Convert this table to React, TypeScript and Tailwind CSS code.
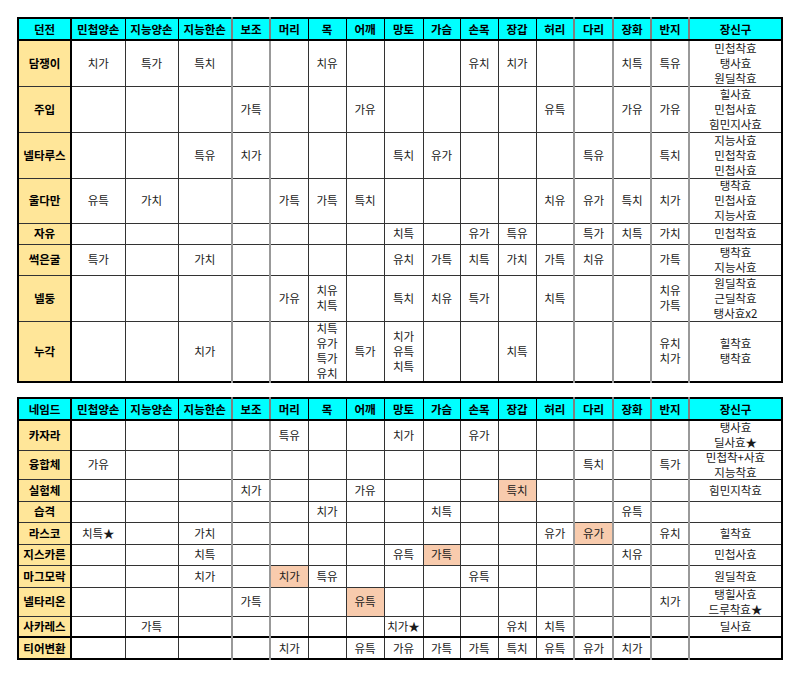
type Cell = string | string[]

const COLS = ['민첩양손', '지능양손', '지능한손', '보조', '머리', '목', '어깨', '망토', '가슴', '손목', '장갑', '허리', '다리', '장화', '반지', '장신구']
const WIDTHS = [53, 54, 53, 54, 38, 38, 38, 38, 39, 37, 38, 38, 38, 39, 38, 38, 93]
// columns whose left edge is drawn as a thick grey line
const GREY_LEFT = [4, 5, 13, 14, 15, 16]

type Row = { name: string; h: number; cells: Cell[]; hl?: number[]; thickTop?: boolean }

const DUNGEONS: Row[] = [
  { name: '담쟁이', h: 46, cells: ['치가', '특가', '특치', '', '', '치유', '', '', '', '유치', '치가', '', '', '치특', '특유', ['민첩착효', '탱사효', '원딜착효']] },
  { name: '주입', h: 46, cells: ['', '', '', '가특', '', '', '가유', '', '', '', '', '유특', '', '가유', '가유', ['힐사효', '민첩사효', '힘민지사효']] },
  { name: '넬타루스', h: 46, cells: ['', '', '특유', '치가', '', '', '', '특치', '유가', '', '', '', '특유', '', '특치', ['지능사효', '민첩착효', '민첩사효']] },
  { name: '울다만', h: 45, cells: ['유특', '가치', '', '', '가특', '가특', '특치', '', '', '', '', '치유', '유가', '특치', '치가', ['탱착효', '민첩사효', '지능사효']] },
  { name: '자유', h: 21, cells: ['', '', '', '', '', '', '', '치특', '', '유가', '특유', '', '특가', '치특', '가치', '민첩착효'] },
  { name: '썩은굴', h: 31, cells: ['특가', '', '가치', '', '', '', '', '유치', '가특', '치특', '가치', '가특', '치유', '', '가특', ['탱착효', '지능사효']] },
  { name: '넬둥', h: 46, cells: ['', '', '', '', '가유', ['치유', '치특'], '', '특치', '치유', '특가', '', '치특', '', '', ['치유', '가특'], ['원딜착효', '근딜착효', '탱사효x2']] },
  { name: '누각', h: 61, cells: ['', '', '치가', '', '', ['치특', '유가', '특가', '유치'], '특가', ['치가', '유특', '치특'], '', '', '치특', '', '', '', ['유치', '치가'], ['힐착효', '탱착효']] },
]

const RAIDS: Row[] = [
  { name: '카자라', h: 30, cells: ['', '', '', '', '특유', '', '', '치가', '', '유가', '', '', '', '', '', ['탱사효', '딜사효★']] },
  { name: '융합체', h: 29, cells: ['가유', '', '', '', '', '', '', '', '', '', '', '', '특치', '', '특가', ['민첩착+사효', '지능착효']] },
  { name: '실험체', h: 22, cells: ['', '', '', '치가', '', '', '가유', '', '', '', '특치', '', '', '', '', '힘민지착효'], hl: [10] },
  { name: '습격', h: 21, cells: ['', '', '', '', '', '치가', '', '', '치특', '', '', '', '', '유특', '', ''] },
  { name: '라스코', h: 22, cells: ['치특★', '', '가치', '', '', '', '', '', '', '', '', '유가', '유가', '', '유치', '힐착효'], hl: [12] },
  { name: '지스카른', h: 21, cells: ['', '', '치특', '', '', '', '', '유특', '가특', '', '', '', '', '치유', '', '민첩사효'], hl: [8] },
  { name: '마그모락', h: 22, cells: ['', '', '치가', '', '치가', '특유', '', '', '', '유특', '', '', '', '', '', '원딜착효'], hl: [4] },
  { name: '넬타리온', h: 29, cells: ['', '', '', '가특', '', '', '유특', '', '', '', '', '', '', '', '치가', ['탱힐사효', '드루착효★']], hl: [6] },
  { name: '사카레스', h: 21, cells: ['', '가특', '', '', '', '', '', '치가★', '', '', '유치', '치특', '', '', '', '딜사효'] },
  { name: '티어변환', h: 22, thickTop: true, cells: ['', '', '', '', '치가', '', '유특', '가유', '가특', '가특', '특치', '유특', '유가', '치가', '', ''] },
]

function Lines({ v }: { v: Cell }) {
  const list = Array.isArray(v) ? v : [v]
  // negative margin keeps multi-line cells from pushing the row taller than set
  return (
    <div className="-my-[3px]">
      {list.map((t, i) => (
        <div key={i}>{t}</div>
      ))}
    </div>
  )
}

function GearTable({ title, rows }: { title: string; rows: Row[] }) {
  return (
    <table className="table-fixed border-collapse border-2 border-black w-[764px] text-[11.5px] leading-[15px] text-[#1a1a1a]">
      <colgroup>
        {WIDTHS.map((w, i) => (
          <col key={i} style={{ width: w }} />
        ))}
      </colgroup>
      <thead>
        <tr className="h-[22px]">
          <th className="bg-[#00ffff] font-bold text-black border border-black border-b-2 border-r-2 p-0">{title}</th>
          {COLS.map((c, i) => (
            <th
              key={c}
              className={`bg-[#00ffff] font-bold text-black border border-black border-b-2 p-0 whitespace-nowrap ${
                GREY_LEFT.includes(i + 1) ? 'border-l-2 border-l-[#808080]' : ''
              }`}
            >
              {c}
            </th>
          ))}
        </tr>
      </thead>
      <tbody>
        {rows.map((r) => (
          <tr key={r.name} style={{ height: r.h }}>
            <td
              className={`bg-[#ffe699] font-bold text-black text-center border border-[#333] border-r-2 border-r-black p-0 whitespace-nowrap ${
                r.thickTop ? 'border-t-2 border-t-black' : ''
              }`}
            >
              {r.name}
            </td>
            {r.cells.map((c, i) => (
              <td
                key={i}
                className={`text-center align-middle border border-[#333] p-0 whitespace-nowrap ${
                  GREY_LEFT.includes(i + 1) ? 'border-l-2 border-l-[#999]' : ''
                } ${r.hl?.includes(i) ? 'bg-[#f8cbad]' : 'bg-white'} ${r.thickTop ? 'border-t-2 border-t-black' : ''}`}
              >
                <Lines v={c} />
              </td>
            ))}
          </tr>
        ))}
      </tbody>
    </table>
  )
}

export default function App() {
  return (
    <div
      className="min-h-screen bg-white pt-[17px] pl-[17px] flex flex-col gap-[14px]"
      style={{ fontFamily: '"Noto Sans CJK KR", "Noto Sans", sans-serif' }}
    >
      <GearTable title="던전" rows={DUNGEONS} />
      <GearTable title="네임드" rows={RAIDS} />
    </div>
  )
}
